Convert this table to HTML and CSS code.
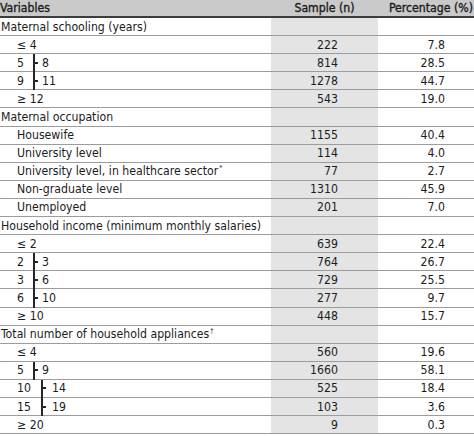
FILE: index.html
```html
<!DOCTYPE html>
<html lang="en">
<head>
<meta charset="utf-8">
<title>Table</title>
<link rel="stylesheet" href="styles.css">
</head>
<body>
<table class="data">
  <colgroup><col class="c-var"><col class="c-n"><col class="c-pct"></colgroup>
  <thead>
    <tr><th class="var">Variables</th><th class="n">Sample (n)</th><th class="pct">Percentage (%)</th></tr>
  </thead>
  <tbody>
    <tr><td class="var">Maternal schooling (years)</td><td class="n"></td><td class="pct"></td></tr>
    <tr><td class="var sub">≤ 4</td><td class="n">222</td><td class="pct">7.8</td></tr>
    <tr><td class="var sub"><span class="lo">5</span><span class="br"></span><span class="hi">8</span></td><td class="n">814</td><td class="pct">28.5</td></tr>
    <tr><td class="var sub"><span class="lo">9</span><span class="br"></span><span class="hi">11</span></td><td class="n">1278</td><td class="pct">44.7</td></tr>
    <tr><td class="var sub">≥ 12</td><td class="n">543</td><td class="pct">19.0</td></tr>

    <tr><td class="var">Maternal occupation</td><td class="n"></td><td class="pct"></td></tr>
    <tr><td class="var sub">Housewife</td><td class="n">1155</td><td class="pct">40.4</td></tr>
    <tr><td class="var sub">University level</td><td class="n">114</td><td class="pct">4.0</td></tr>
    <tr><td class="var sub">University level, in healthcare sector<sup>*</sup></td><td class="n">77</td><td class="pct">2.7</td></tr>
    <tr><td class="var sub">Non-graduate level</td><td class="n">1310</td><td class="pct">45.9</td></tr>
    <tr><td class="var sub">Unemployed</td><td class="n">201</td><td class="pct">7.0</td></tr>

    <tr><td class="var">Household income (minimum monthly salaries)</td><td class="n"></td><td class="pct"></td></tr>
    <tr><td class="var sub">≤ 2</td><td class="n">639</td><td class="pct">22.4</td></tr>
    <tr><td class="var sub"><span class="lo">2</span><span class="br"></span><span class="hi">3</span></td><td class="n">764</td><td class="pct">26.7</td></tr>
    <tr><td class="var sub"><span class="lo">3</span><span class="br"></span><span class="hi">6</span></td><td class="n">729</td><td class="pct">25.5</td></tr>
    <tr><td class="var sub"><span class="lo">6</span><span class="br"></span><span class="hi">10</span></td><td class="n">277</td><td class="pct">9.7</td></tr>
    <tr><td class="var sub">≥ 10</td><td class="n">448</td><td class="pct">15.7</td></tr>

    <tr><td class="var">Total number of household appliances<sup>†</sup></td><td class="n"></td><td class="pct"></td></tr>
    <tr><td class="var sub">≤ 4</td><td class="n">560</td><td class="pct">19.6</td></tr>
    <tr><td class="var sub"><span class="lo">5</span><span class="br"></span><span class="hi">9</span></td><td class="n">1660</td><td class="pct">58.1</td></tr>
    <tr><td class="var sub"><span class="lo wide">10</span><span class="br wide"></span><span class="hi">14</span></td><td class="n">525</td><td class="pct">18.4</td></tr>
    <tr><td class="var sub"><span class="lo wide">15</span><span class="br wide"></span><span class="hi">19</span></td><td class="n">103</td><td class="pct">3.6</td></tr>
    <tr><td class="var sub">≥ 20</td><td class="n">9</td><td class="pct">0.3</td></tr>
  </tbody>
</table>
</body>
</html>
```

FILE: styles.css
```css
html, body {
  margin: 0;
  padding: 0;
  background: #ffffff;
}

.data {
  width: 474px;
  table-layout: fixed;
  border-collapse: separate;
  border-spacing: 0;
  font-family: "DejaVu Sans Condensed", "Liberation Sans", sans-serif;
  font-size: 12.2px;
  color: #1c1c1c;
}

.c-var { width: 271px; }
.c-n { width: 107px; }
.c-pct { width: 96px; }

.data th {
  height: 16px;
  padding: 0;
  background: #cacaca;
  border-bottom: 2px solid #3c3c3c;
  font-weight: normal;
  -webkit-text-stroke: 0.35px #1c1c1c;
  line-height: 16px;
  white-space: nowrap;
  vertical-align: middle;
}

.data th.var { text-align: left; padding-left: 0; }
.data th.n { text-align: center; }
.data th.pct { text-align: right; padding-right: 1px; }

.data td {
  height: 17.1px;
  padding: 0;
  line-height: 16px;
  border-bottom: 1px solid #9c9c9c;
  white-space: nowrap;
  vertical-align: middle;
  position: relative;
}

.data td.var { padding-left: 1px; }
.data td.sub { padding-left: 17px; }
.data td.n {
  background: #e4e4e4;
  text-align: right;
  padding-right: 40px;
}
.data td.pct {
  text-align: right;
  padding-right: 29px;
}

.data sup {
  font-size: 7px;
  line-height: 0;
  vertical-align: 5px;
  margin-left: 1px;
}

.lo {
  display: inline-block;
  width: 16px;
}
.lo.wide { width: 24px; }

.br {
  display: inline-block;
  width: 9px;
}
.br.wide { width: 11px; }

.br::before {
  content: "";
  position: absolute;
  top: 0;
  bottom: -1px;
  width: 2px;
  background: #262626;
}

.br::after {
  content: "";
  position: absolute;
  top: 50%;
  margin-top: -1px;
  width: 5px;
  height: 2px;
  background: #262626;
}
```
